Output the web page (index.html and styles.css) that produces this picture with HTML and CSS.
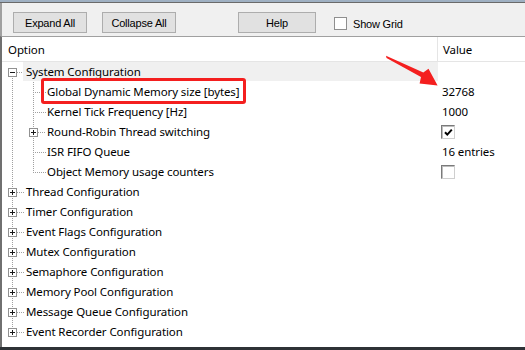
FILE: index.html
```html
<!DOCTYPE html>
<html>
<head>
<meta charset="utf-8">
<link rel="stylesheet" href="styles.css">
</head>
<body>
<div class="app">
  <div class="topstrip"></div>
  <div class="toolbar">
    <button class="btn btn-expand">Expand All</button>
    <button class="btn btn-collapse">Collapse All</button>
    <button class="btn btn-help">Help</button>
    <label class="showgrid"><span class="cb"></span><span>Show Grid</span></label>
  </div>
  <div class="panel">
    <div class="header">
      <div class="hcell hcell-opt">Option</div>
      <div class="hcell hcell-val">Value</div>
    </div>
    <div class="tree">
      <div class="row">
        <div class="opt l-first"><span class="exp minus"></span><span class="h h-sel"></span><span class="label sel">System Configuration</span></div>
        <div class="val"></div>
      </div>
      <div class="row">
        <div class="opt l-child child"><span class="h h-long"></span><span class="label"><span class="marked">Global Dynamic Memory size [bytes]</span></span></div>
        <div class="val">32768</div>
      </div>
      <div class="row">
        <div class="opt l-child child"><span class="h h-long"></span><span class="label">Kernel Tick Frequency [Hz]</span></div>
        <div class="val">1000</div>
      </div>
      <div class="row">
        <div class="opt l-child child child-exp"><span class="exp plus"></span><span class="h"></span><span class="label">Round-Robin Thread switching</span></div>
        <div class="val"><span class="vcb"><svg width="11" height="11" viewBox="0 0 11 11"><path d="M2 5.2 L4.3 7.6 L8.8 2.6" fill="none" stroke="#000" stroke-width="2"/></svg></span></div>
      </div>
      <div class="row">
        <div class="opt l-child child"><span class="h h-long"></span><span class="label">ISR FIFO Queue</span></div>
        <div class="val">16 entries</div>
      </div>
      <div class="row">
        <div class="opt l-childlast child"><span class="h h-long"></span><span class="label">Object Memory usage counters</span></div>
        <div class="val"><span class="vcb"></span></div>
      </div>
      <div class="row">
        <div class="opt l-mid"><span class="exp plus"></span><span class="h"></span><span class="label">Thread Configuration</span></div>
        <div class="val"></div>
      </div>
      <div class="row">
        <div class="opt l-mid"><span class="exp plus"></span><span class="h"></span><span class="label">Timer Configuration</span></div>
        <div class="val"></div>
      </div>
      <div class="row">
        <div class="opt l-mid"><span class="exp plus"></span><span class="h"></span><span class="label">Event Flags Configuration</span></div>
        <div class="val"></div>
      </div>
      <div class="row">
        <div class="opt l-mid"><span class="exp plus"></span><span class="h"></span><span class="label">Mutex Configuration</span></div>
        <div class="val"></div>
      </div>
      <div class="row">
        <div class="opt l-mid"><span class="exp plus"></span><span class="h"></span><span class="label">Semaphore Configuration</span></div>
        <div class="val"></div>
      </div>
      <div class="row">
        <div class="opt l-mid"><span class="exp plus"></span><span class="h"></span><span class="label">Memory Pool Configuration</span></div>
        <div class="val"></div>
      </div>
      <div class="row">
        <div class="opt l-mid"><span class="exp plus"></span><span class="h"></span><span class="label">Message Queue Configuration</span></div>
        <div class="val"></div>
      </div>
      <div class="row">
        <div class="opt l-last"><span class="exp plus"></span><span class="h"></span><span class="label">Event Recorder Configuration</span></div>
        <div class="val"></div>
      </div>
    </div>
  </div>
  <div class="bottombar"></div>
  <svg class="arrow" width="65" height="45" viewBox="0 0 65 45">
    <polygon points="6,5.8 43.3,22.4 48.5,18.8 57.6,35.4 39.6,33.6 41,26.9 6.5,8" fill="#f41f1f"/>
  </svg>
</div>
</body>
</html>
```
FILE: styles.css
```css
* { box-sizing: border-box; }
html, body { margin: 0; padding: 0; }
body {
  width: 525px;
  height: 350px;
  overflow: hidden;
  background: #f0f0f0;
  font-family: "Noto Sans", "Open Sans", sans-serif;
  color: #000;
}
.app {
  position: relative;
  width: 525px;
  height: 350px;
  display: flex;
  flex-direction: column;
}
.topstrip {
  height: 3px;
  background: linear-gradient(to bottom, #9fb0c2 0 2px, #6a6a6a 2px 3px);
}
.toolbar {
  height: 33px;
  display: flex;
  align-items: flex-start;
  padding-top: 9px;
  padding-left: 13px;
  background: #f0f0f0;
  border-left: 2px solid #a0a0a0;
  font-family: "Liberation Sans", Arial, sans-serif;
  font-size: 11px;
}
.btn {
  height: 21px;
  margin: 0;
  padding: 0;
  background: #e1e1e1;
  border: 1px solid #adadad;
  font-family: "Liberation Sans", Arial, sans-serif;
  font-size: 11px;
  letter-spacing: -0.2px;
  color: #000;
}
.btn-expand { width: 74px; margin-left: -2px; }
.btn-collapse { width: 74px; margin-left: 15px; }
.btn-help { width: 78px; margin-left: 62px; }
.showgrid {
  display: flex;
  align-items: center;
  margin-left: 18px;
  margin-top: 5px;
  gap: 6px;
  letter-spacing: -0.2px;
}
.cb {
  width: 13px;
  height: 13px;
  background: #fff;
  border: 1px solid #8f8f8f;
}
.panel {
  flex: 1;
  background: #fff;
  border-top: 1px solid #a0a0a0;
  border-left: 2px solid #707070;
  display: flex;
  flex-direction: column;
  font-size: 11.5px;
  letter-spacing: -0.1px;
}
.header {
  height: 25px;
  display: grid;
  grid-template-columns: 436px 1fr;
  border-bottom: 1px solid #e5e5e5;
}
.hcell {
  display: flex;
  align-items: center;
  padding-top: 1px;
}
.hcell-opt { padding-left: 6px; border-right: 1px solid #e5e5e5; }
.hcell-val { padding-left: 5px; }
.tree { display: flex; flex-direction: column; }
.row {
  height: 20px;
  display: grid;
  grid-template-columns: 436px 1fr;
}
.opt {
  display: flex;
  align-items: center;
  height: 20px;
  background-repeat: no-repeat;
  --dots: repeating-linear-gradient(to bottom, #a0a0a0 0 1px, transparent 1px 2px);
}
.l-first { background-image: var(--dots); background-size: 1px 10px; background-position: 10px 10px; }
.l-mid { background-image: var(--dots); background-size: 1px 20px; background-position: 10px 0; }
.l-last { background-image: var(--dots); background-size: 1px 11px; background-position: 10px 0; }
.l-child { background-image: var(--dots), var(--dots); background-size: 1px 20px, 1px 20px; background-position: 10px 0, 31px 0; }
.l-childlast { background-image: var(--dots), var(--dots); background-size: 1px 20px, 1px 11px; background-position: 10px 0, 31px 0; }
.exp {
  position: relative;
  width: 9px;
  height: 9px;
  margin-left: 6px;
  border: 1px solid #919191;
  background: #fff;
  flex: none;
}
.exp::before {
  content: "";
  position: absolute;
  left: 1px; top: 3px;
  width: 5px; height: 1px;
  background: #1a1a1a;
}
.plus::after {
  content: "";
  position: absolute;
  left: 3px; top: 1px;
  width: 1px; height: 5px;
  background: #1a1a1a;
}
.h {
  height: 1px;
  width: 8px;
  flex: none;
  background: repeating-linear-gradient(to right, #a0a0a0 0 1px, transparent 1px 2px);
}
.h-sel { width: 6px; }
.child { padding-left: 31px; }
.child-exp { padding-left: 0; }
.child-exp .exp { margin-left: 27px; }
.h-long { width: 13px; }
.label {
  flex: 1;
  height: 20px;
  display: flex;
  align-items: center;
  padding-left: 1px;
  padding-bottom: 1px;
  white-space: nowrap;
}
.label.sel { background: #f0f0f0; padding-left: 3px; height: 19px; align-self: flex-start; }
.marked { position: relative; }
.marked::after {
  content: "";
  position: absolute;
  left: -6px; right: -7px;
  top: -6px; bottom: -5px;
  border: 3px solid #f41f1f;
  border-radius: 3px;
}
.val {
  display: flex;
  align-items: center;
  padding-left: 4px;
  padding-bottom: 1px;
  white-space: nowrap;
}
.vcb {
  width: 14px;
  height: 14px;
  margin-left: -1px;
  margin-bottom: -1px;
  border: 1px solid;
  border-color: #7a7a7a #cfcfcf #cfcfcf #7a7a7a;
  box-shadow: inset 1px 1px 0 #bdbdbd;
  background: #fff;
  display: flex;
  align-items: center;
  justify-content: center;
}
.bottombar { height: 3px; background: #2e3236; }
.arrow { position: absolute; left: 380px; top: 50px; }
```
